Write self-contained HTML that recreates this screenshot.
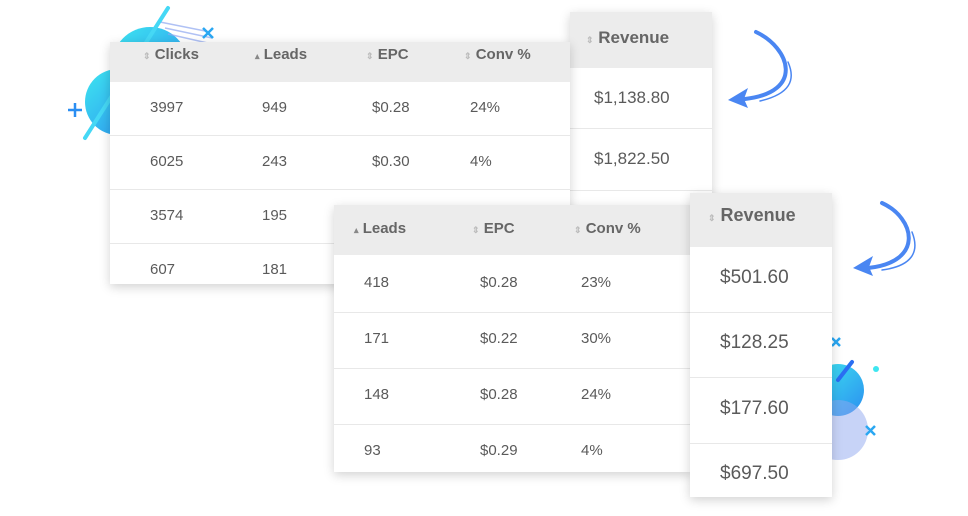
<!DOCTYPE html>
<html><head><meta charset="utf-8"><style>
*{margin:0;padding:0;box-sizing:border-box}
body{width:968px;height:516px;background:#fff;position:relative;overflow:hidden;font-family:"Liberation Sans",sans-serif;color:#5a5a5a}
.card{position:absolute;background:#fff;box-shadow:0 3px 10px rgba(0,0,0,.18)}
.hdr{position:absolute;left:0;right:0;top:0;background:#ececec}
.t{position:absolute;white-space:nowrap}
.h{font-weight:bold;color:#666}
.line{position:absolute;left:0;right:0;height:1px;background:#e8e8e8}
.s{font-size:9px;color:#bbb}
</style></head><body>

<svg style="position:absolute;left:0;top:0" width="968" height="516">
<defs>
<linearGradient id="g1" x1="0" y1="0" x2="1" y2="1"><stop offset="0" stop-color="#3ee6f0"/><stop offset="1" stop-color="#2b8ef0"/></linearGradient>
</defs>
<!-- top-left decoration -->
<circle cx="150" cy="65" r="38" fill="url(#g1)"/>
<circle cx="118" cy="102" r="33" fill="url(#g1)"/>
<g stroke="#8fa8f0" stroke-width="1.5" opacity=".7">
<line x1="160" y1="22" x2="210" y2="32"/><line x1="165" y1="28" x2="212" y2="38"/><line x1="168" y1="34" x2="212" y2="44"/>
</g>
<line x1="168" y1="8" x2="85" y2="138" stroke="#45d8f5" stroke-width="4" stroke-linecap="round"/>
<path d="M203 28 l10 10 M213 28 l-10 10" stroke="#2aa7f2" stroke-width="2.5"/>
<path d="M68 110 h14 M75 103 v14" stroke="#2a8ef2" stroke-width="2.5"/>
<!-- bottom-right decoration -->
<circle cx="838" cy="390" r="26" fill="url(#g1)"/>
<circle cx="838" cy="430" r="30" fill="#8fa8f0" opacity=".5"/>
<line x1="852" y1="362" x2="838" y2="380" stroke="#2a6ef2" stroke-width="4" stroke-linecap="round"/>
<circle cx="876" cy="369" r="3" fill="#3ee6f0"/>
<path d="M832 338 l8 8 M840 338 l-8 8 M866 426 l9 9 M875 426 l-9 9" stroke="#2aa7f2" stroke-width="2.5"/>
<!-- arrows -->
<g fill="none" stroke="#4a86f2" stroke-linecap="round">
<path d="M756 32 C790 48 805 92 745 99" stroke-width="4"/>
<path d="M788 62 C796 80 790 94 760 101" stroke-width="1.5"/>
<path d="M882 203 C915 218 925 262 868 268" stroke-width="4"/>
<path d="M912 232 C920 252 912 266 882 270" stroke-width="1.5"/>
</g>
<path d="M728 100 L748 88 L744 99 L748 108 Z" fill="#4a86f2"/>
<path d="M853 268 L873 256 L869 267 L873 276 Z" fill="#4a86f2"/>
</svg>

<!-- Revenue card 1 -->
<div class="card" style="left:570px;top:12px;width:142px;height:200px">
<div class="hdr" style="height:56px"></div>
<div class="t h" style="left:16px;top:16px;font-size:17px"><span class="s">⇕</span> Revenue</div>
<div class="t" style="left:24px;top:76px;font-size:17px">$1,138.80</div>
<div class="line" style="top:116px"></div>
<div class="t" style="left:24px;top:137px;font-size:17px">$1,822.50</div>
<div class="line" style="top:178px"></div>
</div>

<!-- Table 1 -->
<div class="card" style="left:110px;top:42px;width:460px;height:242px;font-size:15px">
<div class="hdr" style="height:40px"></div>
<div class="t h" style="left:33px;top:4px"><span class="s">⇕</span> Clicks</div>
<div class="t h" style="left:145px;top:4px"><span class="s" style="color:#888">▴</span> Leads</div>
<div class="t h" style="left:256px;top:4px"><span class="s">⇕</span> EPC</div>
<div class="t h" style="left:354px;top:4px"><span class="s">⇕</span> Conv %</div>
<div class="t" style="left:40px;top:57px">3997</div><div class="t" style="left:152px;top:57px">949</div><div class="t" style="left:262px;top:57px">$0.28</div><div class="t" style="left:360px;top:57px">24%</div>
<div class="line" style="top:93px"></div>
<div class="t" style="left:40px;top:111px">6025</div><div class="t" style="left:152px;top:111px">243</div><div class="t" style="left:262px;top:111px">$0.30</div><div class="t" style="left:360px;top:111px">4%</div>
<div class="line" style="top:147px"></div>
<div class="t" style="left:40px;top:165px">3574</div><div class="t" style="left:152px;top:165px">195</div>
<div class="line" style="top:201px"></div>
<div class="t" style="left:40px;top:219px">607</div><div class="t" style="left:152px;top:219px">181</div>
</div>

<!-- Table 2 -->
<div class="card" style="left:334px;top:205px;width:358px;height:267px;font-size:15px">
<div class="hdr" style="height:50px"></div>
<div class="t h" style="left:20px;top:15px"><span class="s" style="color:#888">▴</span> Leads</div>
<div class="t h" style="left:138px;top:15px"><span class="s">⇕</span> EPC</div>
<div class="t h" style="left:240px;top:15px"><span class="s">⇕</span> Conv %</div>
<div class="t" style="left:30px;top:69px">418</div><div class="t" style="left:146px;top:69px">$0.28</div><div class="t" style="left:247px;top:69px">23%</div>
<div class="line" style="top:107px"></div>
<div class="t" style="left:30px;top:125px">171</div><div class="t" style="left:146px;top:125px">$0.22</div><div class="t" style="left:247px;top:125px">30%</div>
<div class="line" style="top:163px"></div>
<div class="t" style="left:30px;top:181px">148</div><div class="t" style="left:146px;top:181px">$0.28</div><div class="t" style="left:247px;top:181px">24%</div>
<div class="line" style="top:219px"></div>
<div class="t" style="left:30px;top:237px">93</div><div class="t" style="left:146px;top:237px">$0.29</div><div class="t" style="left:247px;top:237px">4%</div>
</div>

<!-- Revenue card 2 -->
<div class="card" style="left:690px;top:193px;width:142px;height:304px">
<div class="hdr" style="height:54px"></div>
<div class="t h" style="left:18px;top:12px;font-size:18px"><span class="s">⇕</span> Revenue</div>
<div class="t" style="left:30px;top:74px;font-size:19px">$501.60</div>
<div class="line" style="top:119px"></div>
<div class="t" style="left:30px;top:139px;font-size:19px">$128.25</div>
<div class="line" style="top:184px"></div>
<div class="t" style="left:30px;top:205px;font-size:19px">$177.60</div>
<div class="line" style="top:250px"></div>
<div class="t" style="left:30px;top:270px;font-size:19px">$697.50</div>
</div>

</body></html>
